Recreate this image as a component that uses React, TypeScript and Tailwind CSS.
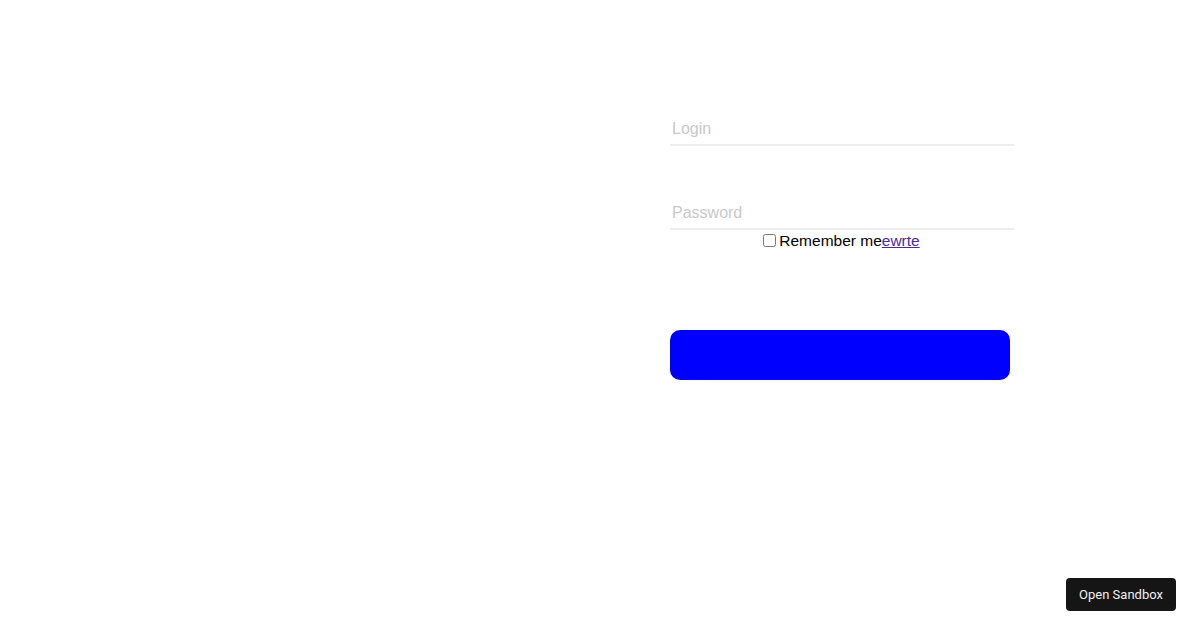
import React from "react";

const App = () => {
  return (
    <div className="relative w-full h-[630px] bg-white font-['Liberation_Sans',Arial,sans-serif]">
      <div className="grid grid-cols-2 h-full">
        <div />
        <div className="pl-[70px] pt-[104px]">
          <form className="w-[344px] flex flex-col" onSubmit={(e) => e.preventDefault()}>
            <input
              type="text"
              placeholder="Login"
              className="h-[42px] px-[2px] pt-[10px] border-b-2 border-[#eeeeee] text-base text-black placeholder:text-[#c8c8c8] outline-none"
            />
            <input
              type="password"
              placeholder="Password"
              className="mt-[42px] h-[42px] px-[2px] pt-[10px] border-b-2 border-[#eeeeee] text-base text-black placeholder:text-[#c8c8c8] outline-none"
            />
            <div className="pt-[1px] pr-[5px] text-center text-[15.5px] leading-[20px] text-black">
              <label>
                <input type="checkbox" className="mr-[3px] ml-[4px] align-[-1px]" />
                Remember me
              </label>
              <a href="#" className="text-[#4f2a96] underline">
                ewrte
              </a>
            </div>
            <button
              type="submit"
              className="mt-[79px] w-[340px] h-[50px] rounded-[10px] bg-[#0000ff]"
            />
          </form>
        </div>
      </div>
      <button className="absolute right-[24px] bottom-[19px] w-[110px] h-[33px] rounded-[4px] bg-[#151515] text-[13px] text-[#f0f0f0] font-['Roboto',Arial,sans-serif]">
        Open Sandbox
      </button>
    </div>
  );
};

export default App;
